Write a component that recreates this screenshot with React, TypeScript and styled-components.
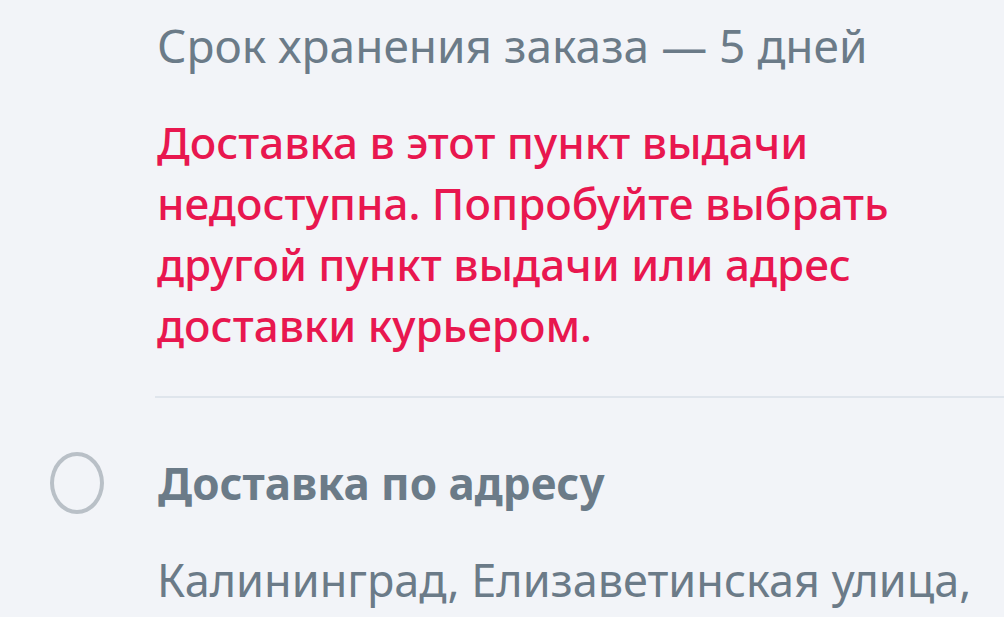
import styled, { createGlobalStyle } from 'styled-components';

const GlobalStyle = createGlobalStyle`
  html, body {
    margin: 0;
    padding: 0;
    background: #f2f4f8;
    overflow: hidden;
  }
  body {
    font-family: "Noto Sans", "Liberation Sans", sans-serif;
  }
`;

const Page = styled.div`
  width: 1004px;
  height: 617px;
  overflow: hidden;
  background: #f2f4f8;
`;

const PickupBlock = styled.section`
  padding: 10px 0 0 157px;
`;

const StorageTerm = styled.p`
  margin: 0;
  font-size: 46px;
  line-height: 70px;
  font-weight: 400;
  color: #6b7b88;
`;

const Warning = styled.p`
  margin: 32px 0 0;
  font-size: 44px;
  line-height: 61px;
  font-weight: 500;
  color: #e8174f;
`;

const Divider = styled.hr`
  margin: 40px 0 0 155px;
  border: none;
  border-top: 2px solid #dfe5ec;
`;

const Option = styled.label`
  display: flex;
  align-items: center;
  gap: 54px;
  margin-top: 54px;
  padding-left: 50px;
`;

const Radio = styled.span<{ $checked?: boolean }>`
  flex: none;
  width: 54px;
  height: 62px;
  box-sizing: border-box;
  border-radius: 50%;
  border: 4px solid ${p => (p.$checked ? '#e8174f' : '#b9c0c7')};
`;

const OptionTitle = styled.span`
  font-size: 44px;
  line-height: 60px;
  font-weight: 700;
  color: #6b7b88;
`;

const Address = styled.p`
  margin: 36px 0 0 157px;
  font-size: 45px;
  line-height: 60px;
  font-weight: 400;
  color: #6b7b88;
  white-space: nowrap;
`;

export default function App() {
  return (
    <Page>
      <GlobalStyle />
      <PickupBlock>
        <StorageTerm>Срок хранения заказа — 5 дней</StorageTerm>
        <Warning>
          Доставка в этот пункт выдачи
          <br />
          недоступна. Попробуйте выбрать
          <br />
          другой пункт выдачи или адрес
          <br />
          доставки курьером.
        </Warning>
      </PickupBlock>
      <Divider />
      <Option>
        <Radio />
        <OptionTitle>Доставка по адресу</OptionTitle>
      </Option>
      <Address>Калининград, Елизаветинская улица,</Address>
    </Page>
  );
}
